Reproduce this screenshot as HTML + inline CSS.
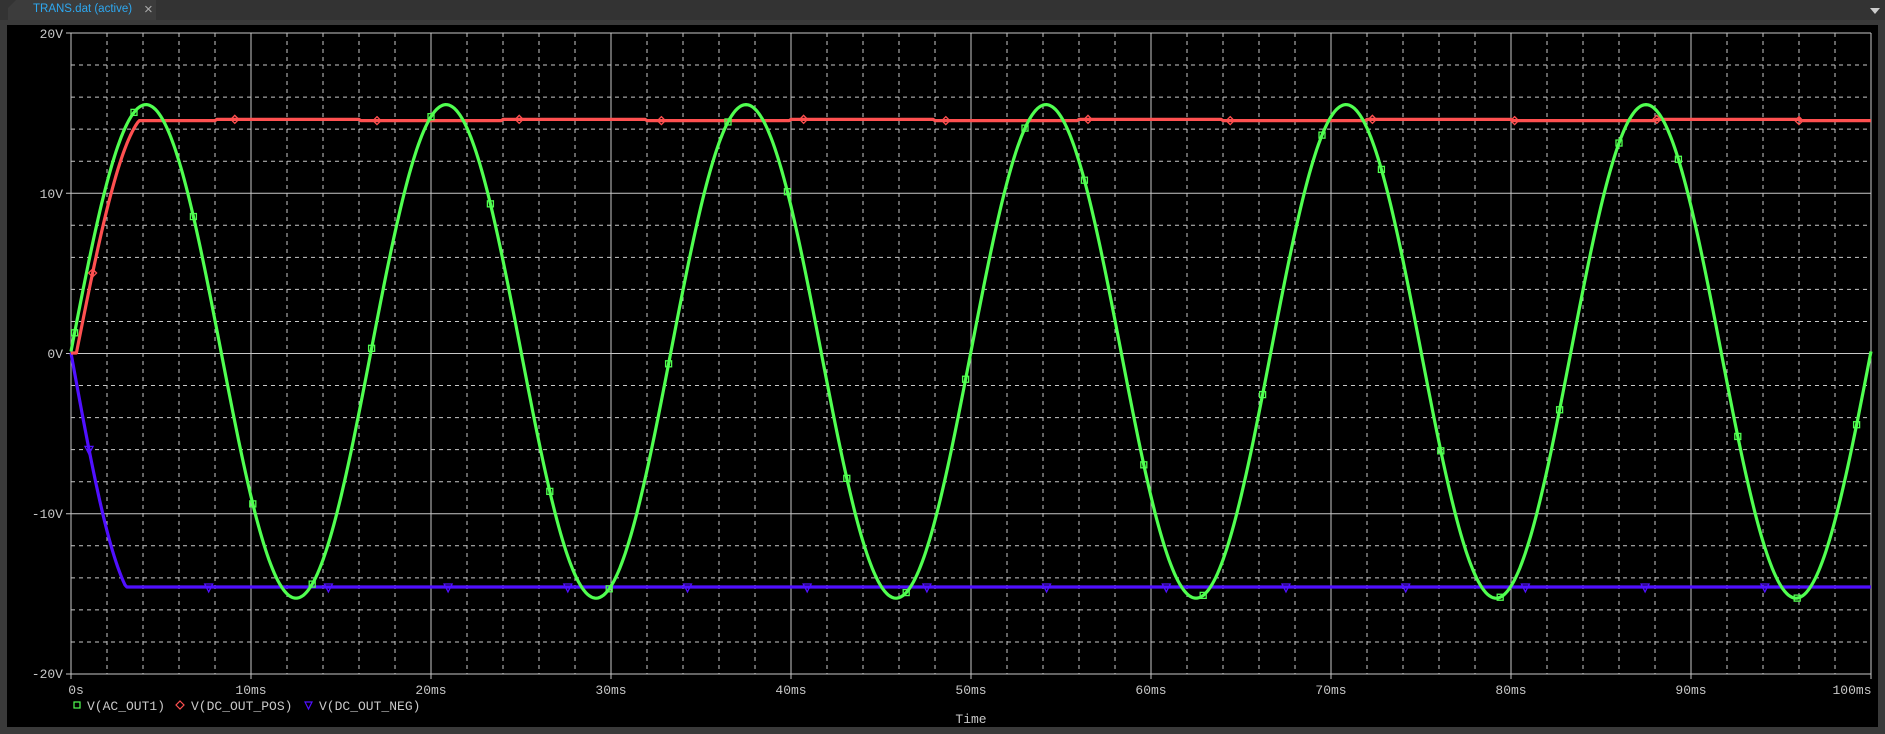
<!DOCTYPE html>
<html><head><meta charset="utf-8"><style>
html,body{margin:0;padding:0;background:#3a3a3a;width:1885px;height:734px;overflow:hidden;font-family:"Liberation Mono",monospace}
.top{position:absolute;left:0;top:0;width:1885px;height:20px;background:#333}
.tab{position:absolute;left:8px;top:0;width:148px;height:20px;background:#3c3c3c;clip-path:polygon(8px 0,100% 0,100% 100%,0 100%,0 8px)}
.tab span{position:absolute;left:25px;top:3px;font:11.5px "Liberation Sans",sans-serif;color:#2ea8f0}
.tab b{position:absolute;left:136px;top:1px;color:#aaa;font:15px "Liberation Sans",sans-serif;font-weight:normal}
.panel{position:absolute;left:7px;top:25px;width:1871px;height:702px;background:#000}
svg{position:absolute;left:0;top:0}
</style></head><body>
<div class="top"></div>
<div class="tab"><span>TRANS.dat (active)</span><b>×</b></div>
<div style="position:absolute;left:1870px;top:8px;width:0;height:0;border-left:5px solid transparent;border-right:5px solid transparent;border-top:6px solid #ccc"></div>
<div class="panel"></div>
<svg id="s" width="1885" height="734" xmlns="http://www.w3.org/2000/svg" font-family="Liberation Mono, monospace" font-size="13" fill="#c8c8c8">
<g id="grid"></g>
<g text-anchor="end">
<text x="63" y="38">20V</text>
<text x="63" y="198">10V</text>
<text x="63" y="358">0V</text>
<text x="63" y="518">-10V</text>
<text x="63" y="678">-20V</text>
</g>
<g text-anchor="middle">
<text x="76" y="694">0s</text>
<text x="251" y="694">10ms</text>
<text x="431" y="694">20ms</text>
<text x="611" y="694">30ms</text>
<text x="791" y="694">40ms</text>
<text x="971" y="694">50ms</text>
<text x="1151" y="694">60ms</text>
<text x="1331" y="694">70ms</text>
<text x="1511" y="694">80ms</text>
<text x="1691" y="694">90ms</text>
<text x="1852" y="694">100ms</text>
<text x="971" y="723">Time</text>
</g>
<rect x="74" y="702" width="6" height="6" fill="none" stroke="#50ff50" stroke-width="1.2"/>
<text x="87" y="710">V(AC_OUT1)</text>
<path d="M180 701 l4 4 l-4 4 l-4 -4z" fill="none" stroke="#ff5050" stroke-width="1.2"/>
<text x="191" y="710">V(DC_OUT_POS)</text>
<path d="M305 702 h7 l-3.5 7z" fill="none" stroke="#5010ff" stroke-width="1.2"/>
<text x="319" y="710">V(DC_OUT_NEG)</text>
<g id="w"></g>
</svg>
<script>
var g=document.getElementById('grid'),w=document.getElementById('w'),h='';
var X0=71,SX=18,Y0=353,SY=16.025;
function X(t){return X0+t*SX} function Y(v){return Y0-v*SY}
for(var i=1;i<50;i++){var x=X(i*2);if(i%5)h+='<line x1="'+x+'" y1="33" x2="'+x+'" y2="674" stroke="#c8c8c8" stroke-dasharray="4,4" stroke-width="1"/>';}
for(var i=1;i<20;i++){var y=33+i*32.05;if(i%5)h+='<line x1="71" y1="'+y+'" x2="1871" y2="'+y+'" stroke="#c8c8c8" stroke-dasharray="4,4" stroke-width="1"/>';}
for(var i=0;i<=10;i++){var x=X(i*10);h+='<line x1="'+x+'" y1="33" x2="'+x+'" y2="679" stroke="#c8c8c8"/>';}
for(var i=0;i<=4;i++){var y=33+i*160.25;h+='<line x1="66" y1="'+y+'" x2="1871" y2="'+y+'" stroke="#c8c8c8"/>';}
g.innerHTML=h;
function ac(t){return 15.4*Math.sin(2*Math.PI*0.06*t)+0.1}
function pos(t){if(t>=4.2)return 14.5+(Math.floor(t/8)%2?0.08:0);return Math.min(14.5,Math.max(0,15.0*Math.sin(2*Math.PI*0.06*(t-0.3))));}
function neg(t){if(t>=3.8)return -14.6;return -Math.min(14.6,15.6*Math.sin(2*Math.PI*0.06*t*1.05));}
function path(f,c){var d='';for(var t=0;t<=100;t+=0.1)d+=(d?'L':'M')+X(t).toFixed(1)+' '+Y(f(t)).toFixed(1);return '<path d="'+d+'" fill="none" stroke="'+c+'" stroke-width="3.2" stroke-linejoin="round"/>'}
var o=path(neg,'#5010ff')+path(pos,'#ff5050')+path(ac,'#50ff50');
for(var t=0.2;t<100;t+=3.3){var x=X(t),y=Y(ac(t));o+='<rect x="'+(x-3)+'" y="'+(y-3)+'" width="6" height="6" fill="none" stroke="#50ff50" stroke-width="1.3"/>';}
for(var t=1.2;t<100;t+=7.9){var x=X(t),y=Y(pos(t));o+='<path d="M'+x+' '+(y-4)+' l4 4 l-4 4 l-4 -4z" fill="none" stroke="#ff5050" stroke-width="1.3"/>';}
for(var t=1.0;t<100;t+=6.65){var x=X(t),y=Y(neg(t));o+='<path d="M'+(x-4)+' '+(y-3)+' h8 l-4 8z" fill="none" stroke="#5010ff" stroke-width="1.3"/>';}
w.innerHTML=o;
</script>
</body></html>
